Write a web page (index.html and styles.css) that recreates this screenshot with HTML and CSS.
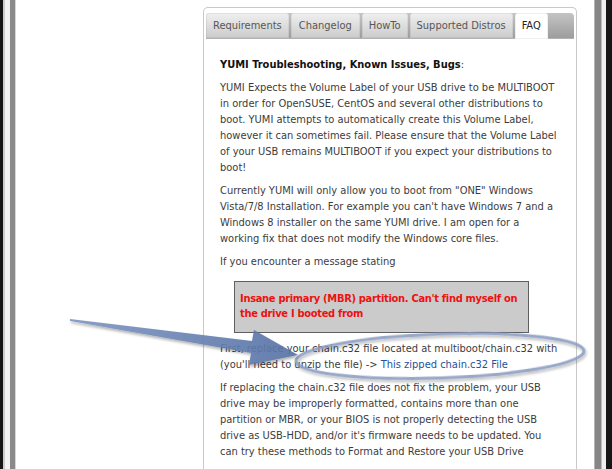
FILE: index.html
```html
<!DOCTYPE html>
<html lang="en">
<head>
    <meta charset="UTF-8">
    <title>YUMI FAQ</title>
    <link rel="stylesheet" href="styles.css">
</head>
<body>
    <div class="frame frame-left"></div>

    <div class="page">
        <div class="panel">
            <ul class="tabs">
                <li>Requirements</li>
                <li>Changelog</li>
                <li>HowTo</li>
                <li>Supported Distros</li>
                <li class="active">FAQ</li>
            </ul>

            <div class="tab-body">
                <p class="title"><b>YUMI Troubleshooting, Known Issues, Bugs</b>:</p>

                <p>YUMI Expects the Volume Label of your USB drive to be MULTIBOOT in order for OpenSUSE, CentOS and several other distributions to boot. YUMI attempts to automatically create this Volume Label, however it can sometimes fail. Please ensure that the Volume Label of your USB remains MULTIBOOT if you expect your distributions to boot!</p>

                <p>Currently YUMI will only allow you to boot from "ONE" Windows Vista/7/8 Installation. For example you can't have Windows 7 and a Windows 8 installer on the same YUMI drive. I am open for a working fix that does not modify the Windows core files.</p>

                <p>If you encounter a message stating</p>

                <div class="error-box">Insane primary (MBR) partition. Can't find myself on the drive I booted from</div>

                <p>First, replace your chain.c32 file located at multiboot/chain.c32 with (you'll need to unzip the file) -&gt; <a href="#">This zipped chain.c32 File</a></p>

                <p>If replacing the chain.c32 file does not fix the problem, your USB drive may be improperly formatted, contains more than one partition or MBR, or your BIOS is not properly detecting the USB drive as USB-HDD, and/or it's firmware needs to be updated. You can try these methods to Format and Restore your USB Drive</p>
            </div>
        </div>
    </div>

    <div class="frame frame-right"></div>

    <!-- annotation drawn on top of the screenshot -->
    <svg class="markup" width="612" height="469" viewBox="0 0 612 469">
        <defs>
            <filter id="soft" x="-20%" y="-50%" width="140%" height="200%">
                <feGaussianBlur in="SourceAlpha" stdDeviation="1.5"/>
                <feOffset dx="1" dy="2" result="blur"/>
                <feComponentTransfer><feFuncA type="linear" slope="0.35"/></feComponentTransfer>
                <feMerge><feMergeNode/><feMergeNode in="SourceGraphic"/></feMerge>
            </filter>
            <linearGradient id="arrowFill" x1="0" y1="0" x2="1" y2="0">
                <stop offset="0" stop-color="#7f97c2"/>
                <stop offset="1" stop-color="#5873a6"/>
            </linearGradient>
        </defs>
        <ellipse cx="440" cy="356" rx="144" ry="22" transform="rotate(-2 440 356)"
                 fill="none" stroke="#8799c0" stroke-width="3" opacity="0.85" filter="url(#soft)"/>
        <polygon points="70,319 252,341 254,330 298,355 249,365 251,353 70,321"
                 fill="url(#arrowFill)" opacity="0.92" filter="url(#soft)"/>
    </svg>
</body>
</html>
```

FILE: styles.css
```css
html, body {
    margin: 0;
    height: 469px;
    overflow: hidden;
    background: #fff;
}
body {
    display: flex;
    position: relative;
    font-family: "DejaVu Sans Condensed", "Liberation Sans", sans-serif;
    font-size: 11px;
    color: #3c3c3c;
}

.frame {
    flex: none;
    height: 100%;
}
.frame-left {
    width: 16px;
    background: linear-gradient(to right,
        #161616 0 3px, #cdcdcd 3px 5px, #f3f3f3 5px 10px,
        #8a8a8a 10px 15px, #d6d6d6 15px 16px);
}
.frame-right {
    width: 18px;
    background: linear-gradient(to right,
        #b4b4b4 0 1px, #868686 1px 7px, #bcbcbc 7px 8px,
        #efefef 8px 12px, #161616 12px 18px);
}

.page {
    flex: 1;
    height: 100%;
}

.panel {
    margin: 7px 0 0 187px;
    width: 374px;
    height: 480px;
    box-sizing: border-box;
    border: 1px solid #c9c9c9;
    border-bottom: 0;
    border-radius: 5px 5px 0 0;
    padding: 5px 2px 0;
}

.tabs {
    display: flex;
    gap: 2px;
    margin: 0;
    padding: 0;
    list-style: none;
    height: 25px;
    background: linear-gradient(#c4c4c4, #9d9d9d);
    border-radius: 4px 4px 0 0;
    border-bottom: 1px solid #b3b3b3;
}
.tabs li {
    padding: 0 7px;
    line-height: 25px;
    color: #575757;
    background: linear-gradient(#f0f0f0, #cbcbcb);
    border-radius: 3px 3px 0 0;
    box-shadow: inset 0 0 0 1px rgba(0, 0, 0, 0.06);
}
.tabs li:nth-child(2) {
    padding: 0 8px;
}
.tabs li.active {
    background: #fff;
    color: #222;
    margin-bottom: -1px;
    line-height: 26px;
}

.tab-body {
    padding: 18px 14px 0 14px;
}
.tab-body p {
    margin: 0 0 7px;
    line-height: 16px;
}
.title b {
    color: #111;
}
.tab-body a {
    color: #24529a;
    text-decoration: none;
}

.error-box {
    margin: 11px 0 8px 14px;
    width: 295px;
    box-sizing: border-box;
    padding: 9px 3px 11px 5px;
    background: #cbcbcb;
    border: 1px solid #5f5f5f;
    color: #ee1111;
    font-weight: bold;
    line-height: 15px;
    letter-spacing: -0.3px;
}

.markup {
    position: absolute;
    left: 0;
    top: 0;
    pointer-events: none;
}
```
